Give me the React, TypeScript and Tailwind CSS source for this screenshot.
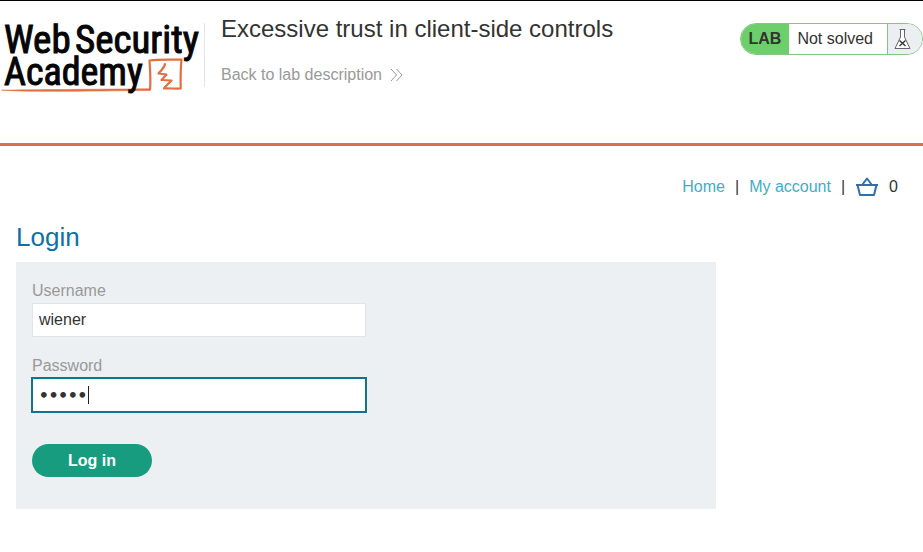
import { useState } from "react";

function AcademyLogo() {
  return (
    <svg
      width="204"
      height="88"
      viewBox="0 12 204 88"
      role="img"
      aria-label="Web Security Academy"
      className="shrink-0"
    >
      <g fill="none" stroke="#e0703f" strokeLinejoin="round" strokeLinecap="round">
        <path d="M2 89.200C30 88.600 100 88.300 150 87.800L150 89.500C100 89.700 40 91.500 2 89.200Z" fill="#e0703f" strokeWidth="0.600" />
        <path d="M150 88.500C151 78 150 68 149.500 59.500C160 58.200 170 59 181.500 58.500C180.500 68 180.500 78 180.700 87.500C175 88 169 87 164 87.500" strokeWidth="2.200" />
        <path d="M165 63C164.500 67 161 69 158.500 72.500L166.500 73.500L161.500 79L171.500 79.500L164.500 86.500" strokeWidth="2.200" />
      </g>
      <g
        fontFamily="'Roboto Condensed', 'Liberation Sans Narrow', Roboto, sans-serif"
        fill="#050505"
        stroke="#050505"
        strokeWidth="1"
      >
        <text x="4" y="52" fontSize="39">Web</text>
        <text x="75" y="52" fontSize="39">Security</text>
        <text x="4" y="84" fontSize="38">Academy</text>
      </g>
    </svg>
  );
}

function FlaskIcon() {
  return (
    <svg width="18" height="22" viewBox="0 0 18 22" fill="none" stroke="#666" strokeWidth="1" aria-hidden="true">
      <path d="M5.500 1.500H11.500M6.500 1.500V9L1 20.500H16L10.500 9V1.500" fill="#fff" />
      <path d="M5.500 12.500L11.500 18M11.500 12.500L5.500 18" stroke="#333" strokeWidth="1.400" />
    </svg>
  );
}

function BasketIcon() {
  return (
    <svg width="24" height="20" viewBox="0 0 24 20" fill="none" stroke="#2f70ab" strokeWidth="2" aria-hidden="true">
      <path d="M1 8H23M2.500 8L5 18H19L21.500 8M7.500 7.500L12 1.500L16.500 7.500" strokeLinejoin="round" />
    </svg>
  );
}

export default function App() {
  const [username, setUsername] = useState("wiener");
  const [password, setPassword] = useState("peter");

  return (
    <div className="w-full min-h-screen bg-white border-t border-black font-['Liberation_Sans',Arial,sans-serif] text-base text-[#333332]">

      {/* LAB HEADER */}
      <header className="flex items-start border-b-3 border-[#dd7048] pt-3 pb-[42px]">
        <AcademyLogo />
        <div className="mt-2.5 h-16 border-l border-[#e6e6e6]" />
        <div className="ml-4 flex-1">
          <h2 className="text-2xl leading-8">Excessive trust in client-side controls</h2>
          <a href="#" className="mt-[18px] inline-flex items-center gap-2 text-[#999]">
            Back to lab description
            <svg width="13" height="14" viewBox="0 0 13 14" fill="none" stroke="#999" strokeWidth="1" aria-hidden="true">
              <path d="M1 1L6.500 7L1 13M6.500 1L12 7L6.500 13" />
            </svg>
          </a>
        </div>
        <div className="mt-2.5 flex h-8 overflow-hidden rounded-full border border-[#86c486] bg-white">
          <strong className="flex items-center bg-[#6dcf6c] px-2">LAB</strong>
          <span className="flex items-center pl-2 pr-3.5">Not solved</span>
          <span className="flex w-[35px] items-center border-l border-[#86c486] bg-[#ebeff2] pl-1.5">
            <FlaskIcon />
          </span>
        </div>
      </header>

      {/* NAVIGATION */}
      <nav className="flex items-center justify-end gap-2.5 pt-[29px] pr-[25px]">
        <a href="#" className="text-[#3fadc9]">Home</a>
        <span>|</span>
        <a href="#" className="text-[#3fadc9]">My account</a>
        <span>|</span>
        <a href="#" aria-label="Basket"><BasketIcon /></a>
        <span>0</span>
      </nav>

      {/* LOGIN */}
      <main className="px-4 pt-5">
        <h1 className="text-[26px] leading-[37px] text-[#0d71a7]">Login</h1>
        <form
          className="mt-1.5 max-w-[700px] bg-[#ecf0f3] px-4 pt-[17px] pb-8"
          onSubmit={(e) => e.preventDefault()}
        >
          <label htmlFor="username" className="block text-[#999]">Username</label>
          <input
            id="username"
            type="text"
            value={username}
            onChange={(e) => setUsername(e.target.value)}
            className="block h-[34px] w-full max-w-[334px] border border-[#e2e5e8] bg-white px-1.5 outline-none"
          />
          <label htmlFor="password" className="mt-[17px] block text-[#999]">Password</label>
          <div className="relative max-w-[334px]">
            <input
              id="password"
              type="password"
              value={password}
              onChange={(e) => setPassword(e.target.value)}
              className="block h-[34px] w-full border border-[#0f7391] bg-white px-1.5 font-['DejaVu_Sans_Mono',monospace] font-bold outline outline-[#0f7391] caret-transparent"
            />
            <span className="absolute top-2 left-14 h-[18px] w-px bg-[#222]" />
          </div>
          <button
            type="submit"
            className="mt-8 h-[33px] w-[120px] rounded-full bg-[#189c80] font-bold text-white"
          >
            Log in
          </button>
        </form>
      </main>
    </div>
  );
}
